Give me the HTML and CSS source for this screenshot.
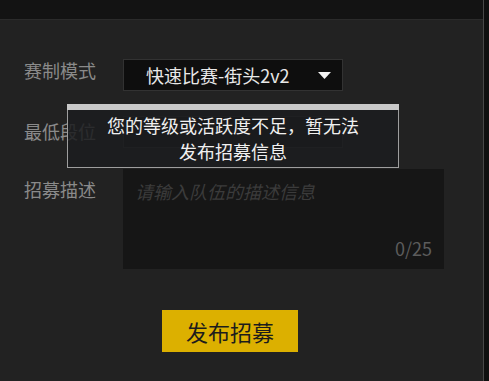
FILE: index.html
```html
<!DOCTYPE html>
<html lang="zh-CN">
<head>
<meta charset="utf-8">
<title>发布招募</title>
<link rel="stylesheet" href="styles.css">
</head>
<body>
<div class="app">
  <div class="header"><div class="title">发布招募信息</div></div>
  <div class="form">
    <div class="label label-1">赛制模式</div>
    <div class="select select-1">
      <span class="select-text">快速比赛-街头2v2</span>
      <svg class="caret" width="13" height="7" viewBox="0 0 13 7"><polygon points="0,0 13,0 6.5,7" fill="#f2f2f2"/></svg>
    </div>

    <div class="label label-2">最低段位</div>
    <div class="select select-2"></div>

    <div class="label label-3">招募描述</div>
    <div class="textarea">
      <div class="placeholder">请输入队伍的描述信息</div>
      <div class="counter">0/25</div>
    </div>

    <div class="btn-cell"><button class="btn">发布招募</button></div>
  </div>
  <div class="tooltip">
    <div class="tooltip-bar"></div>
    <div class="tooltip-body">您的等级或活跃度不足，暂无法<br>发布招募信息</div>
  </div>
</div>
</body>
</html>
```

FILE: styles.css
```css
html, body {
  margin: 0;
  padding: 0;
}
body {
  background: #0f0f0f;
  font-family: "Noto Sans CJK SC", "Noto Sans", sans-serif;
  width: 489px;
  height: 381px;
  overflow: hidden;
}
.app {
  position: relative;
  width: 483px;
  height: 381px;
  background: #222222;
  border-right: 1px solid #474747;
}
.header {
  height: 19px;
  background: #131313;
  border-bottom: 1px solid #2b2b2b;
  overflow: hidden;
  text-align: center;
  padding-right: 18px;
}
.title {
  color: #ffffff;
  font-size: 17px;
  line-height: 20px;
  margin-top: -19px;
}
.form {
  display: grid;
  grid-template-columns: 99px 321px;
  padding: 39px 0 0 24px;
}
.label {
  color: #8a8a8a;
  font-size: 18px;
  line-height: 18px;
  align-self: start;
}
.label-1 { padding-top: 2px; }
.label-2 { padding-top: 6px; margin-top: 25px; }
.label-3 { padding-top: 11px; margin-top: 21px; }
.select {
  box-sizing: border-box;
  width: 220px;
  height: 32px;
  background: #0e0e0e;
  border: 1px solid #323232;
  display: flex;
  align-items: center;
  padding-left: 22px;
  padding-right: 11px;
}
.select-2 {
  margin-top: 25px;
}
.select-text {
  flex: 1;
  color: #e8e8e8;
  font-size: 18px;
  line-height: 20px;
}
.caret {
  display: block;
  margin-top: 1px;
}
.textarea {
  box-sizing: border-box;
  margin-top: 21px;
  width: 321px;
  height: 100px;
  background: #161616;
  padding: 10px 12px 11px 12px;
  display: flex;
  flex-direction: column;
  justify-content: space-between;
}
.placeholder {
  color: #3b3b3b;
  font-size: 18px;
  line-height: 24px;
  font-style: italic;
}
.counter {
  align-self: flex-end;
  color: #5c5c5c;
  font-size: 18px;
  line-height: 20px;
}
.btn-cell {
  grid-column: 2;
  margin-top: 41px;
  padding-left: 39px;
}
.btn {
  display: block;
  width: 136px;
  height: 42px;
  border: none;
  background: #dcb000;
  color: #1c1c1c;
  font-family: "Noto Sans CJK SC", "Noto Sans", sans-serif;
  font-size: 22px;
  line-height: 24px;
  padding: 0;
}
.tooltip {
  position: absolute;
  left: 67px;
  top: 104px;
  width: 332px;
  box-sizing: border-box;
  border: 1px solid #9e9e9e;
  border-top: none;
}
.tooltip-bar {
  height: 6px;
  background: #c9c9c9;
  margin: 0 -1px;
}
.tooltip-body {
  height: 57px;
  box-sizing: border-box;
  background: rgba(28, 29, 32, 0.86);
  color: #f0f0f0;
  font-size: 18px;
  line-height: 26px;
  text-align: center;
  padding-top: 2px;
}
```
